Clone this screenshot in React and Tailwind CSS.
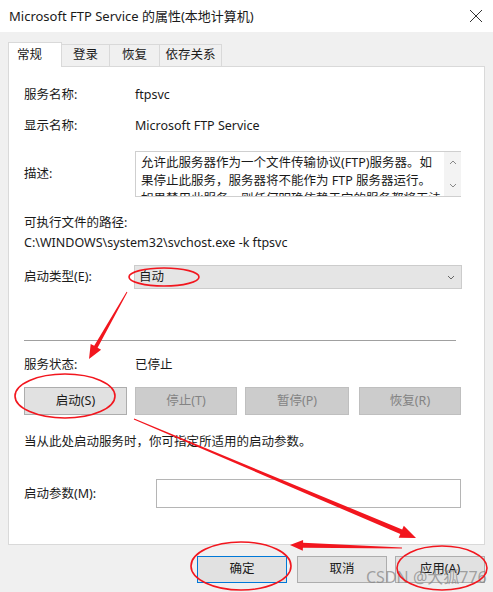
import React from "react";

function arrowPoly(x1, y1, x2, y2, w1, w2, hl, hw) {
  const dx = x2 - x1, dy = y2 - y1;
  const len = Math.hypot(dx, dy);
  const ux = dx / len, uy = dy / len;
  const nx = -uy, ny = ux;
  const bx = x2 - ux * hl, by = y2 - uy * hl;
  const p = [
    [x1 + nx * w1 / 2, y1 + ny * w1 / 2],
    [bx + nx * w2 / 2, by + ny * w2 / 2],
    [bx + nx * hw / 2, by + ny * hw / 2],
    [x2, y2],
    [bx - nx * hw / 2, by - ny * hw / 2],
    [bx - nx * w2 / 2, by - ny * w2 / 2],
    [x1 - nx * w1 / 2, y1 - ny * w1 / 2],
  ];
  return p.map((q) => q[0].toFixed(1) + "," + q[1].toFixed(1)).join(" ");
}

function Btn({ children, className = "" }) {
  return (
    <div className={"flex items-center justify-center border text-[12.5px] " + className}>
      {children}
    </div>
  );
}

export default function App() {
  const red = "#f2161e";
  return (
    <div className="relative w-[493px] h-[592px] overflow-hidden bg-[#f0f0f0] text-[#1a1a1a] font-['Noto_Sans','Noto_Sans_CJK_SC',sans-serif]">
      {/* title bar */}
      <div className="h-[32px] bg-white flex items-center justify-between pl-[9px] pr-[9px]">
        <span className="text-[13px] leading-none">Microsoft FTP Service 的属性(本地计算机)</span>
        <svg width="14" height="14" viewBox="0 0 14 14" className="mr-[1px]">
          <path d="M1 1 L13 13 M13 1 L1 13" stroke="#333" strokeWidth="1" />
        </svg>
      </div>

      {/* tabs */}
      <div className="flex items-end pl-[8px] h-[34px] text-[12.5px]">
        <div className="w-[54px] h-[25px] bg-white border border-b-0 border-[#d9d9d9] flex items-center pl-[8px] relative top-[1px]">常规</div>
        <div className="w-[48px] h-[22px] border border-l-0 border-b-0 border-[#d9d9d9] flex items-center justify-center">登录</div>
        <div className="w-[50px] h-[22px] border border-l-0 border-b-0 border-[#d9d9d9] flex items-center justify-center">恢复</div>
        <div className="w-[62px] h-[22px] border border-l-0 border-b-0 border-[#d9d9d9] flex items-center justify-center">依存关系</div>
      </div>

      {/* panel */}
      <div className="ml-[8px] w-[477px] h-[479px] bg-white border border-[#d9d9d9] pl-[15px] pt-[19px] text-[12.5px] leading-[18px]">
        <div className="flex">
          <div className="w-[111px]">服务名称:</div>
          <div>ftpsvc</div>
        </div>
        <div className="flex mt-[13px]">
          <div className="w-[111px]">显示名称:</div>
          <div>Microsoft FTP Service</div>
        </div>
        <div className="flex mt-[16px] items-center">
          <div className="w-[111px]">描述:</div>
          <div className="w-[326px] h-[46px] border border-[#cfcfcf] border-r-0 flex overflow-hidden">
            <div className="flex-1 pl-[5px] pt-[2px] leading-[18px] overflow-hidden whitespace-nowrap">
              <div>允许此服务器作为一个文件传输协议(FTP)服务器。如</div>
              <div>果停止此服务，服务器将不能作为 FTP 服务器运行。</div>
              <div>如果禁用此服务，则任何明确依赖于它的服务都将无法</div>
            </div>
            <div className="w-[17px] bg-[#f3f3f3] flex flex-col items-center justify-between py-[8px]">
              <svg width="8" height="5" viewBox="0 0 8 5"><path d="M1 4 L4 1 L7 4" stroke="#888" fill="none" strokeWidth="1" /></svg>
              <svg width="8" height="5" viewBox="0 0 8 5"><path d="M1 1 L4 4 L7 1" stroke="#888" fill="none" strokeWidth="1" /></svg>
            </div>
          </div>
        </div>
        <div className="mt-[17px]">可执行文件的路径:</div>
        <div className="mt-[2px]">C:\WINDOWS\system32\svchost.exe -k ftpsvc</div>
        <div className="flex mt-[13px] items-center">
          <div className="w-[110px]">启动类型(E):</div>
          <div className="w-[328px] h-[24px] bg-[#e5e5e5] border border-[#cccccc] flex items-center justify-between pl-[4px] pr-[6px]">
            <span>自动</span>
            <svg width="8" height="5" viewBox="0 0 8 5"><path d="M1 1 L4 4 L7 1" stroke="#666" fill="none" strokeWidth="1" /></svg>
          </div>
        </div>
        <div className="mt-[51px] w-[432px] h-px bg-[#a0a0a0]" />
        <div className="flex mt-[15px]">
          <div className="w-[111px]">服务状态:</div>
          <div>已停止</div>
        </div>
        <div className="flex mt-[13px] h-[28px]">
          <Btn className="w-[103px] bg-[#e1e1e1] border-[#adadad]">启动(S)</Btn>
          <Btn className="w-[102px] ml-[8px] bg-[#cccccc] border-[#bfbfbf] text-[#838383]">停止(T)</Btn>
          <Btn className="w-[104px] ml-[8px] bg-[#cccccc] border-[#bfbfbf] text-[#838383]">暂停(P)</Btn>
          <Btn className="w-[102px] ml-[10px] bg-[#cccccc] border-[#bfbfbf] text-[#838383]">恢复(R)</Btn>
        </div>
        <div className="mt-[18px]">当从此处启动服务时，你可指定所适用的启动参数。</div>
        <div className="flex mt-[28px] items-center">
          <div className="w-[132px]">启动参数(M):</div>
          <div className="w-[305px] h-[29px] border border-[#b5b5b5] bg-white" />
        </div>
      </div>

      {/* bottom buttons */}
      <div className="flex mt-[11px] h-[27px] pl-[197px]">
        <Btn className="w-[90px] bg-[#e1e1e1] border-[#0078d7]">确定</Btn>
        <Btn className="w-[90px] ml-[10px] bg-[#e1e1e1] border-[#adadad]">取消</Btn>
        <Btn className="w-[90px] ml-[8px] bg-[#e1e1e1] border-[#adadad]">应用(A)</Btn>
      </div>

      {/* watermark */}
      <div className="absolute left-[366px] top-[567px] text-[16px] leading-[20px] text-[rgba(130,130,130,0.7)] whitespace-nowrap">CSDN @大狐776</div>

      {/* annotations */}
      <svg className="absolute left-0 top-0 pointer-events-none" width="493" height="592" viewBox="0 0 493 592">
        <g fill="none" stroke={red} strokeWidth="1.6">
          <ellipse cx="164" cy="277" rx="35" ry="9" />
          <ellipse cx="65" cy="396" rx="50" ry="22" />
          <ellipse cx="241" cy="566" rx="50" ry="24" />
          <ellipse cx="442" cy="568" rx="45" ry="22" />
        </g>
        <g fill={red}>
          <polygon points={arrowPoly(127, 292, 89, 359, 1, 4, 14, 12)} />
          <polygon points={arrowPoly(134, 419, 416, 538, 0.8, 5, 16, 13)} />
          <polygon points={arrowPoly(402, 548, 290, 545, 1, 5, 13, 11)} />
        </g>
      </svg>
    </div>
  );
}
